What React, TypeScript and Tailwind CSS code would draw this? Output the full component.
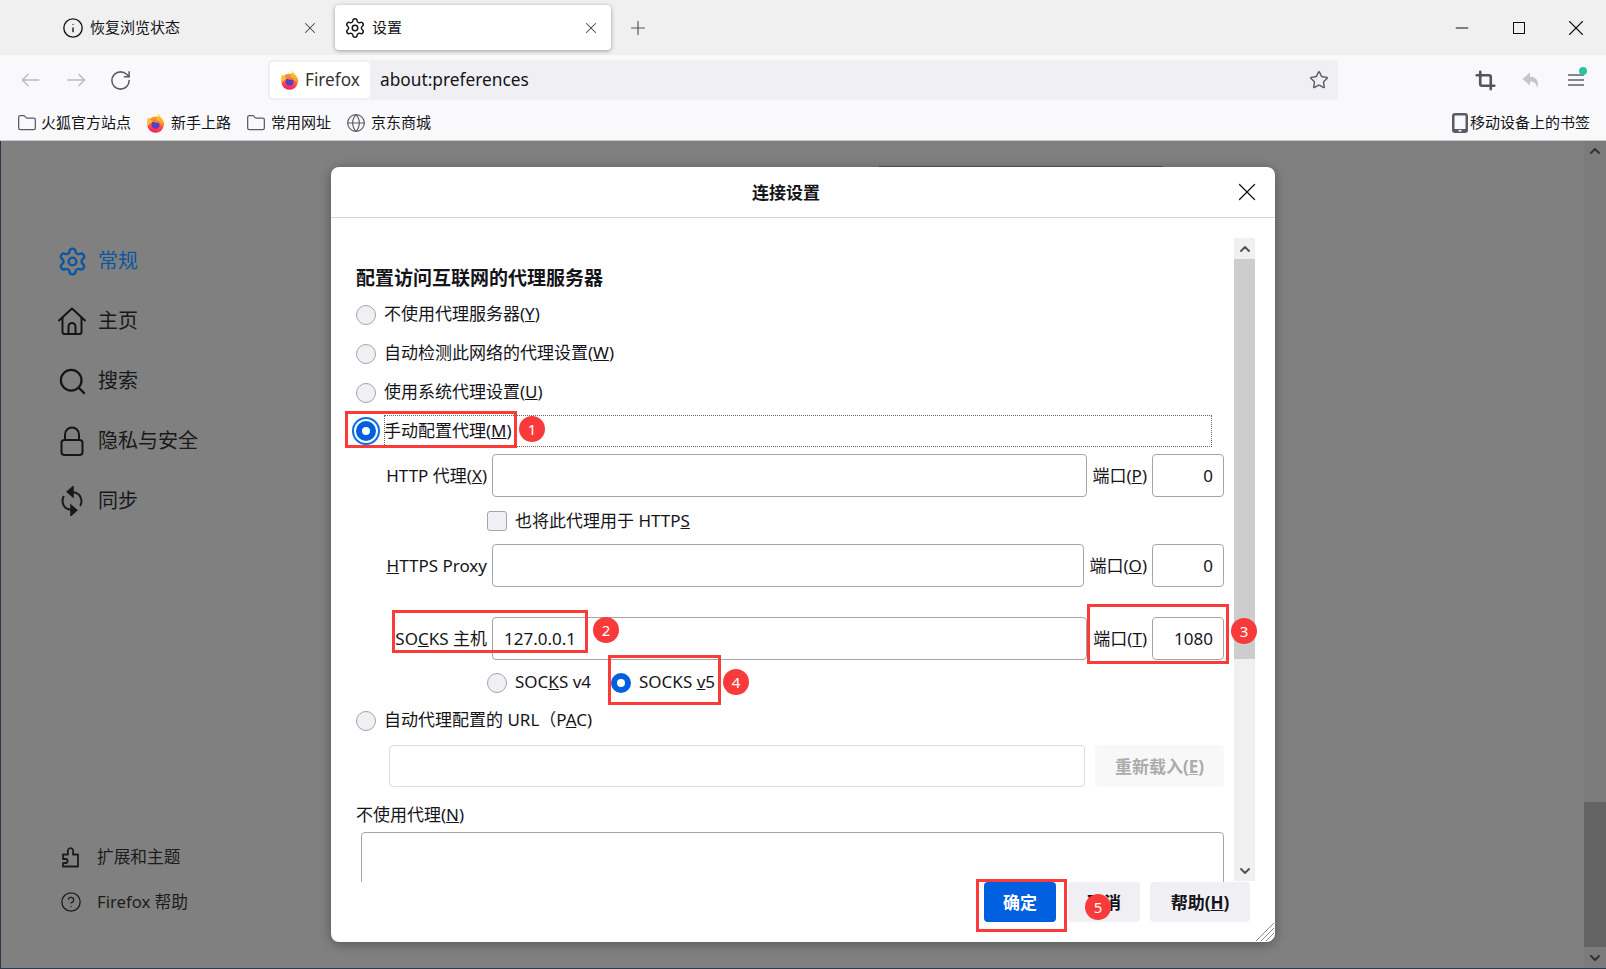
import {
  ChevronDown,
  ChevronUp,
  CircleHelp,
  Crop,
  Folder,
  Globe,
  Info,
  Minus,
  Plus,
  RotateCw,
  Search,
  Settings,
  Star,
  X,
} from "lucide-react";
import type { ReactNode } from "react";

const FirefoxLogo = ({ size = 20 }: { size?: number }) => (
  <svg width={size} height={size} viewBox="0 0 24 24" className="shrink-0">
    <defs>
      <linearGradient id="fx-body" x1="0.6" y1="0" x2="0.4" y2="1">
        <stop offset="0" stopColor="#ffa436" />
        <stop offset="0.55" stopColor="#ff5a3c" />
        <stop offset="1" stopColor="#f5156c" />
      </linearGradient>
      <linearGradient id="fx-flame" x1="0.5" y1="0" x2="0.5" y2="1">
        <stop offset="0" stopColor="#ffe226" />
        <stop offset="1" stopColor="#ff8a2a" />
      </linearGradient>
    </defs>
    <circle cx="11.5" cy="14" r="9.8" fill="url(#fx-body)" />
    <path d="M14 0C15.5 4 22.5 7.5 22 15L11 11C13.5 8 15 4 14 0Z" fill="url(#fx-flame)" />
    <path d="M2.5 5.5C1 9 1 12 2 15.5L8 10Z" fill="#ffbd3a" />
    <circle cx="11.6" cy="14.2" r="4.8" fill="#5a3fc0" />
    <path d="M7.5 10.5C10.5 8.5 14.5 9 16.5 12.5C14 11.2 10.5 11.5 7.5 10.5Z" fill="#ff8a3c" />
  </svg>
);

const HomeIcon = () => (
  <svg width="30" height="30" viewBox="0 0 30 30" fill="none" stroke="#151515" strokeWidth="2" strokeLinecap="round" strokeLinejoin="round" className="shrink-0">
    <path d="M2 14.5L15 2.5L28 14.5" />
    <path d="M5.5 12V26A2 2 0 0 0 7.5 28H22.5A2 2 0 0 0 24.5 26V12" />
    <path d="M11.5 28V20.5A3.5 3.5 0 0 1 18.5 20.5V28" />
  </svg>
);

const LockIcon = () => (
  <svg width="30" height="30" viewBox="0 0 30 30" fill="none" stroke="#151515" strokeWidth="2" className="shrink-0">
    <rect x="4.5" y="14" width="21" height="15" rx="3" />
    <path d="M8 14V8.5A7 7 0 0 1 22 8.5V14" />
  </svg>
);

const SyncIcon = () => (
  <svg width="30" height="30" viewBox="0 0 30 30" fill="none" stroke="#191919" strokeWidth="2" className="shrink-0">
    <path d="M21.5 8.2A9.6 9.6 0 0 0 15 6.2" />
    <path d="M15.8 1.2L10.6 5.7L15.8 10.2Z" fill="#191919" />
    <path d="M8.5 21.8A9.6 9.6 0 0 0 15 23.8" />
    <path d="M14.2 19.8L19.4 24.3L14.2 28.8Z" fill="#191919" />
    <path d="M8.5 21.8A9.6 9.6 0 0 1 6.8 10" />
    <path d="M21.5 8.2A9.6 9.6 0 0 1 23.2 20" />
  </svg>
);

const PuzzleIcon = () => (
  <svg width="20" height="22" viewBox="0 0 20 22" fill="none" stroke="#1c1c1c" strokeWidth="1.8" strokeLinejoin="round" className="shrink-0">
    <path d="M3 20.5H18V8.5H13C13 6.5 13.6 5.5 12.8 3.5C11.8 1.5 8.8 1.5 8 4C7.6 5.5 8 7 8 8.5H3V13H6C8 13 8 17 6 17H3Z" />
  </svg>
);

const NavArrow = ({ dir }: { dir: "left" | "right" }) => (
  <svg width="19" height="14" viewBox="0 0 19 14" fill="none" stroke="#bcbcc0" strokeWidth="1.5" className={dir === "right" ? "ml-[27px] -scale-x-100" : ""}>
    <path d="M18.5 7H1.5M7.5 1L1.5 7L7.5 13" />
  </svg>
);

const PhoneIcon = () => (
  <svg width="16" height="20" viewBox="0 0 16 20" fill="#5b5b66" className="ml-auto shrink-0">
    <path d="M3 0H13A3 3 0 0 1 16 3V17A3 3 0 0 1 13 20H3A3 3 0 0 1 0 17V3A3 3 0 0 1 3 0ZM2.5 3V16H13.5V3A.5.5 0 0 0 13 2.500H3A.5.5 0 0 0 2.500 3Z" fillRule="evenodd" />
    <rect x="6.500" y="17" width="3" height="1.500" fill="#f9f9fb" />
  </svg>
);

const Radio = ({ on, focus }: { on?: boolean; focus?: boolean }) =>
  on ? (
    <span
      className={`w-5 h-5 shrink-0 rounded-full border-[6px] border-[#0060df] bg-white ${
        focus ? "outline-2 outline-offset-2 outline-[#0a6fe8]" : ""
      }`}
    />
  ) : (
    <span className="w-5 h-5 shrink-0 rounded-full border border-[#a4a4ac] bg-[#f0f0f4]" />
  );

const RadioRow = ({ children, className = "h-[39px]" }: { children: ReactNode; className?: string }) => (
  <div className={`flex items-center gap-2 ${className}`}>
    <Radio />
    <span className="pb-[2px]">{children}</span>
  </div>
);

const TextBox = ({ value = "", className = "" }: { value?: string; className?: string }) => (
  <div className={`flex items-center rounded-[4px] border border-[#a5a5a5] bg-white ${className}`}>{value}</div>
);

const ProxyRow = ({
  label,
  port,
  portValue,
  value,
  portWidth = "w-[60px]",
  className = "",
}: {
  label: ReactNode;
  port: ReactNode;
  portValue: string;
  value?: string;
  portWidth?: string;
  className?: string;
}) => (
  <div className={`flex items-stretch ml-[28px] ${className}`}>
    <div className="w-[103px] shrink-0 flex items-center justify-end whitespace-nowrap">{label}</div>
    <TextBox value={value} className="flex-1 ml-[5px] pl-[11px]" />
    <div className={`${portWidth} shrink-0 flex items-center justify-end whitespace-nowrap`}>{port}</div>
    <TextBox value={portValue} className="w-[72px] ml-[5px] shrink-0 justify-end pr-[10px]" />
  </div>
);

const Mark = ({ n, className }: { n: number; className: string }) => (
  <div
    className={`absolute w-[26px] h-[26px] rounded-full bg-[#f93a3a] text-white text-[15px] flex items-center justify-center ${className}`}
  >
    {n}
  </div>
);

const Box = ({ className }: { className: string }) => (
  <div className={`absolute border-[3px] border-[#fb3a3a] ${className}`} />
);

const navItems = [
  { icon: <Settings size={31} strokeWidth={1.9} color="#0f569f" className="-mr-px" />, label: "常规", color: "text-[#0f569f]" },
  { icon: <HomeIcon />, label: "主页", color: "text-[#191919]" },
  { icon: <Search size={31} strokeWidth={1.7} color="#151515" className="-mr-px" />, label: "搜索", color: "text-[#191919]" },
  { icon: <LockIcon />, label: "隐私与安全", color: "text-[#191919]" },
  { icon: <SyncIcon />, label: "同步", color: "text-[#191919]" },
];

export default function App() {
  return (
    <div className="relative w-[1606px] h-[969px] overflow-hidden flex flex-col bg-[#808080] text-[#15141a] font-['Noto_Sans','Noto_Sans_CJK_SC',sans-serif]">
      {/* tab strip */}
      <div className="h-[55px] shrink-0 bg-[#f0f0f0] flex items-start pl-[55px]">
        <div className="mt-[5px] h-[45px] w-[276px] flex items-center pl-[7px] pr-[12px] text-[15px]">
          <Info size={22} strokeWidth={1.5} color="#15141a" />
          <span className="ml-[6px] flex-1">恢复浏览状态</span>
          <X size={18} strokeWidth={1.4} color="#444" />
        </div>
        <div className="mt-[5px] ml-1 h-[45px] w-[276px] flex items-center pl-[9px] pr-[11px] bg-white rounded-[4px] shadow-[0_1px_4px_rgba(0,0,0,0.35)] text-[15px]">
          <Settings size={22} strokeWidth={1.6} color="#15141a" />
          <span className="ml-[6px] flex-1">设置</span>
          <X size={18} strokeWidth={1.4} color="#444" />
        </div>
        <div className="ml-[16px] h-[55px] flex items-center">
          <Plus size={22} strokeWidth={1.3} color="#555" />
        </div>
        <div className="ml-auto mr-[2px] flex h-[55px]">
          <div className="w-[57px] flex items-center justify-center">
            <Minus size={20} strokeWidth={1.2} color="#111" />
          </div>
          <div className="w-[57px] flex items-center justify-center">
            <span className="w-3 h-3 border border-[#111]" />
          </div>
          <div className="w-[57px] flex items-center justify-center">
            <X size={26} strokeWidth={1} color="#111" />
          </div>
        </div>
      </div>

      {/* nav toolbar */}
      <div className="h-[50px] shrink-0 bg-[#f9f9fb] flex items-center pl-[21px]">
        <NavArrow dir="left" />
        <NavArrow dir="right" />
        <RotateCw size={23} strokeWidth={1.6} color="#5b5b66" className="ml-[23px]" />
        <div className="ml-[136px] w-[1070px] h-10 rounded-[4px] bg-[#f0f0f4] flex items-center pl-0.5 pr-[9px]">
          <div className="h-9 w-[100px] bg-white rounded-[4px] flex items-center pl-2.5 gap-[5px] text-[17.2px] text-[#333] pb-px">
            <FirefoxLogo />
            Firefox
          </div>
          <span className="ml-2.5 text-[17.3px] flex-1">about:preferences</span>
          <Star size={20} strokeWidth={1.7} color="#5b5b66" />
        </div>
        <Crop size={21} strokeWidth={3} color="#55555f" className="ml-[137px]" />
        <svg width="20" height="20" viewBox="0 0 20 20" className="ml-[25px]" fill="#c6c6ca">
          <path d="M9 2.500L1.500 9L9 15.500V11.500C13 11.500 15.500 13 16 18C18.500 12 16 7 9 6.800Z" />
        </svg>
        <div className="relative ml-[25px] w-5 h-5 flex flex-col justify-center gap-[3px] px-[2px]">
          <span className="h-[2px] bg-[#85858d]" />
          <span className="h-[2px] bg-[#85858d]" />
          <span className="h-[2px] bg-[#85858d]" />
          <span className="absolute -right-[1px] -top-[3px] w-2 h-2 rounded-full bg-[#2ac3a2]" />
        </div>
      </div>

      {/* bookmarks */}
      <div className="h-[35px] shrink-0 bg-[#f9f9fb] border-b border-[#c8c8c8] box-content flex items-center pl-[17px] text-[15px]">
        <Folder size={20} strokeWidth={1.5} color="#5b5b66" />
        <span className="ml-[4px]">火狐官方站点</span>
        <span className="ml-[15px]">
          <FirefoxLogo />
        </span>
        <span className="ml-[5px]">新手上路</span>
        <Folder size={20} strokeWidth={1.5} color="#5b5b66" className="ml-[15px]" />
        <span className="ml-[5px]">常用网址</span>
        <Globe size={20} strokeWidth={1.4} color="#5b5b66" className="ml-[15px]" />
        <span className="ml-[5px]">京东商城</span>
        <PhoneIcon />
        <span className="mr-4 ml-[2px]">移动设备上的书签</span>
      </div>

      {/* dimmed page */}
      <div className="flex-1 min-h-0 flex border-l border-b border-[#2a3b4d]">
        <aside className="flex-1 flex flex-col justify-between pt-[90px] pb-[44px] pl-[56px]">
          <nav className="flex flex-col">
            {navItems.map((item) => (
              <div key={item.label} className={`h-[60px] flex items-center gap-[11px] text-[20px] ${item.color}`}>
                {item.icon}
                {item.label}
              </div>
            ))}
          </nav>
          <div className="flex flex-col pl-[3px] text-[16.7px] text-[#1c1c1c]">
            <div className="h-[45px] flex items-center gap-[17px]">
              <PuzzleIcon />
              扩展和主题
            </div>
            <div className="h-[45px] flex items-center gap-[17px]">
              <CircleHelp size={22} strokeWidth={1.4} color="#1c1c1c" className="-mr-[2px]" />
              Firefox 帮助
            </div>
          </div>
        </aside>
        <div className="w-[22px] shrink-0 flex flex-col bg-[#7b7b7b]">
          <div className="h-[20px] flex items-center justify-center">
            <ChevronUp size={16} strokeWidth={3} color="#333" />
          </div>
          <div className="flex-1" />
          <div className="h-[145px] bg-[#646464]" />
          <div className="h-[21px] flex items-center justify-center">
            <ChevronDown size={16} strokeWidth={3} color="#333" />
          </div>
        </div>
      </div>

      {/* line of the page behind the dialog */}
      <div className="absolute left-[879px] top-[166px] w-[284px] h-px bg-[#555]" />

      {/* dialog */}
      <div className="absolute left-[331px] top-[167px] w-[944px] h-[775px] bg-white rounded-[8px] shadow-[0_2px_12px_rgba(0,0,0,0.35)] flex flex-col overflow-hidden">
        <div className="h-[51px] shrink-0 border-b border-[#d4d4d4] flex items-center justify-between pl-[421px] pr-[13px]">
          <span className="text-[17px] font-bold pt-[2px]">连接设置</span>
          <X size={30} strokeWidth={1} color="#15141a" />
        </div>

        <div className="h-[664px] shrink-0 flex text-[17px]">
          <div className="flex-1 min-w-0 overflow-hidden pl-[25px] pr-[10px]">
            <h1 className="mt-[47px] h-[26px] mb-[4px] text-[19px] font-bold leading-[26px]">配置访问互联网的代理服务器</h1>
            <RadioRow>
              不使用代理服务器(<u>Y</u>)
            </RadioRow>
            <RadioRow>
              自动检测此网络的代理设置(<u>W</u>)
            </RadioRow>
            <RadioRow>
              使用系统代理设置(<u>U</u>)
            </RadioRow>
            <div className="mt-px h-9 flex items-center gap-2 mr-3">
              <Radio on focus />
              <div className="flex-1 h-8 flex items-center border border-dotted border-[#666]">
                <span className="-ml-px">
                  手动配置代理(<u>M</u>)
                </span>
              </div>
            </div>
            <ProxyRow
              className="mt-[5px] h-[43px]"
              label={
                <>
                  HTTP 代理(<u>X</u>)
                </>
              }
              port={
                <>
                  端口(<u>P</u>)
                </>
              }
              portValue="0"
            />
            <div className="h-[47px] flex items-center gap-2 ml-[131px]">
              <span className="w-5 h-5 rounded-[3px] border border-[#a4a4ac] bg-[#f0f0f4]" />
              <span>
                也将此代理用于 HTTP<u>S</u>
              </span>
            </div>
            <ProxyRow
              className="h-[43px]"
              portWidth="w-[63px]"
              label={
                <>
                  <u>H</u>TTPS Proxy
                </>
              }
              port={
                <>
                  端口(<u>O</u>)
                </>
              }
              portValue="0"
            />
            <ProxyRow
              className="mt-[30px] h-[43px]"
              value="127.0.0.1"
              label={
                <>
                  SO<u>C</u>KS 主机
                </>
              }
              port={
                <>
                  端口(<u>T</u>)
                </>
              }
              portValue="1080"
            />
            <div className="h-[45px] flex items-center ml-[131px]">
              <Radio />
              <span className="ml-2 w-[78px] pb-[2px] whitespace-nowrap">
                SOC<u>K</u>S v4
              </span>
              <span className="ml-[18px] flex">
                <Radio on />
              </span>
              <span className="ml-2 pb-[2px] whitespace-nowrap">
                SOCKS <u>v</u>5
              </span>
            </div>
            <RadioRow className="h-[32px]">
              自动代理配置的 URL（P<u>A</u>C)
            </RadioRow>
            <div className="mt-2 flex h-[42px] ml-[33px] gap-[10px]">
              <div className="flex-1 rounded-[4px] border border-[#dcdcdc]" />
              <div className="w-[129px] pt-[2px] rounded-[4px] bg-[#f8f8f9] text-[#ababab] font-bold flex items-center justify-center">
                <span>
                  重新载入(<u>E</u>)
                </span>
              </div>
            </div>
            <div className="mt-4 h-[26px] flex items-center pb-[2px]">
              不使用代理(<u>N</u>)
            </div>
            <div className="mt-[3px] ml-[5px] h-[80px] rounded-[4px] border border-[#a5a5a5]" />
          </div>
          <div className="w-[21px] mt-5 shrink-0 flex flex-col bg-[#f0f0f0] mb-px">
            <div className="h-[21px] flex items-center justify-center">
              <ChevronUp size={16} strokeWidth={3} color="#555" />
            </div>
            <div className="h-[400px] bg-[#cdcdcd]" />
            <div className="flex-1" />
            <div className="h-[21px] flex items-center justify-center">
              <ChevronDown size={16} strokeWidth={3} color="#555" />
            </div>
          </div>
          <div className="w-5 shrink-0" />
        </div>

        <div className="flex-1 flex items-start justify-end pr-[25px] font-bold text-[17px]">
          <div className="w-[72px] h-10 pt-[2px] rounded-[4px] bg-[#0060df] text-white flex items-center justify-center">确定</div>
          <div className="ml-3 w-[72px] h-10 pt-[2px] rounded-[4px] bg-[#f0f0f4] flex items-center justify-center">取消</div>
          <div className="ml-[10px] w-[100px] h-10 pt-[2px] rounded-[4px] bg-[#f0f0f4] flex items-center justify-center">
            <span>
              帮助(<u>H</u>)
            </span>
          </div>
        </div>

        <svg
          width="20"
          height="20"
          viewBox="0 0 20 20"
          className="absolute right-0 bottom-0"
          stroke="#8a8a8a"
          strokeWidth="1"
        >
          <path d="M1 19L19 1M6 19L19 6M11 19L19 11M16 19L19 16" />
        </svg>
      </div>

      {/* annotations */}
      <Box className="left-[345px] top-[411px] w-[172px] h-[37px]" />
      <Box className="left-[392px] top-[610px] w-[196px] h-[43px]" />
      <Box className="left-[1087px] top-[604px] w-[142px] h-[60px]" />
      <Box className="left-[608px] top-[655px] w-[113px] h-[50px]" />
      <Box className="left-[976px] top-[879px] w-[91px] h-[53px]" />
      <Mark n={1} className="left-[519px] top-[416px]" />
      <Mark n={2} className="left-[593px] top-[617px]" />
      <Mark n={3} className="left-[1231px] top-[618px]" />
      <Mark n={4} className="left-[723px] top-[669px]" />
      <Mark n={5} className="left-[1085px] top-[894px]" />
    </div>
  );
}
